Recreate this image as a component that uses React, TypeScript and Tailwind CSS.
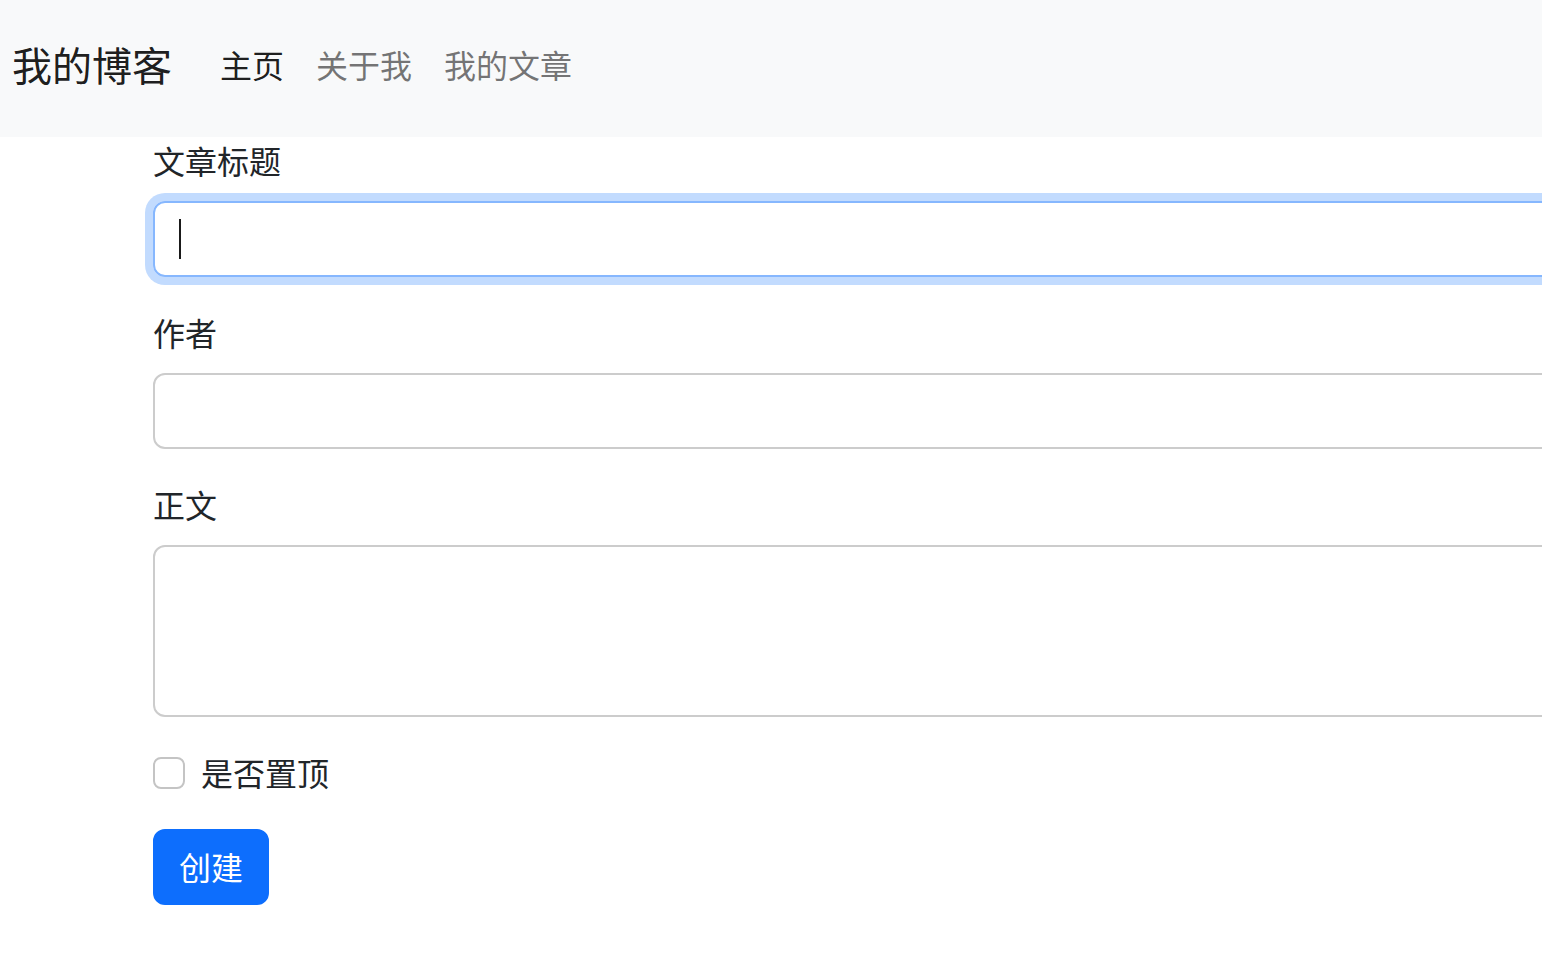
import React from "react";

const font = { fontFamily: '"Noto Sans CJK SC", "Noto Sans", sans-serif' };

function Field({ label, children }: { label: string; children: React.ReactNode }) {
  return (
    <div className="mb-[32px]">
      <label className="block mb-[16px] text-[32px] leading-[46px] pb-[2px] text-[#212529]">{label}</label>
      {children}
    </div>
  );
}

export default function App() {
  return (
    <div className="min-h-screen w-full overflow-hidden bg-white" style={font}>
      {/* navbar */}
      <nav className="h-[137px] bg-[#f8f9fa] flex items-center pl-[12px] pb-[10px]">
        <span className="text-[40px] leading-[60px] text-black/90 mr-[32px]">我的博客</span>
        <div className="flex items-center">
          <a className="px-[16px] text-[32px] leading-[48px] text-black/90">主页</a>
          <a className="px-[16px] text-[32px] leading-[48px] text-black/55">关于我</a>
          <a className="px-[16px] text-[32px] leading-[48px] text-black/55">我的文章</a>
        </div>
      </nav>

      {/* form */}
      <form className="ml-[153px] w-[1700px]">
        <Field label="文章标题">
          <div className="relative">
            <input
              type="text"
              className="block w-full h-[76px] px-[24px] py-[12px] text-[32px] rounded-[12px] border-2 border-[#86b7fe] outline-none shadow-[0_0_0_8px_rgba(13,110,253,0.25)]"
            />
            <span className="absolute left-[26px] top-[18px] w-[2px] h-[40px] bg-[#1a1a1a]" />
          </div>
        </Field>
        <Field label="作者">
          <input
            type="text"
            className="block w-full h-[76px] px-[24px] py-[12px] text-[32px] rounded-[12px] border-2 border-[#cccccc] outline-none"
          />
        </Field>
        <Field label="正文">
          <textarea
            rows={3}
            className="block w-full h-[172px] px-[24px] py-[12px] text-[32px] rounded-[12px] border-2 border-[#cccccc] outline-none resize-none"
          />
        </Field>

        <div className="mb-[32px] flex items-center h-[48px]">
          <span className="w-[32px] h-[32px] rounded-[8px] border-2 border-[#c4c4c4] bg-white" />
          <span className="ml-[16px] text-[32px] leading-[46px] pb-[2px] text-[#212529]">是否置顶</span>
        </div>

        <button
          type="button"
          className="h-[76px] px-[24px] pb-[2px] rounded-[12px] bg-[#0d6efd] border-2 border-[#0d6efd] text-white text-[32px] leading-[46px]"
        >
          创建
        </button>
      </form>
    </div>
  );
}
